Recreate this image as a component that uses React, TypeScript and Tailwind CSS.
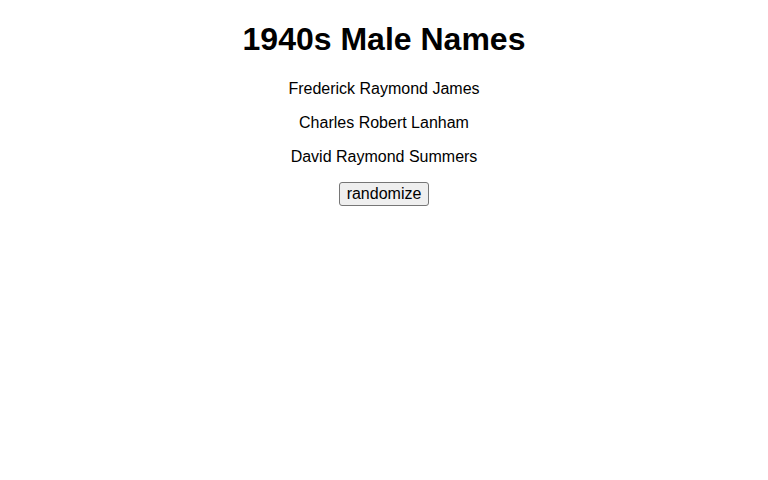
export default function App() {
  return (
    <div className="text-center text-black bg-white" style={{ fontFamily: '"Liberation Sans", Arial, sans-serif' }}>
      <h1 className="text-[32px] leading-[37px] font-bold pt-[21px] mb-[22px]">1940s Male Names</h1>
      <p className="text-[16px] leading-[18px] mb-[16px]">Frederick Raymond James</p>
      <p className="text-[16px] leading-[18px] mb-[16px]">Charles Robert Lanham</p>
      <p className="text-[16px] leading-[18px] mb-[16px]">David Raymond Summers</p>
      <button className="text-[16px] leading-[18px] px-[7px] py-[2px] border border-[#767676] bg-[#efefef] rounded-[3px] text-black">randomize</button>
    </div>
  );
}
